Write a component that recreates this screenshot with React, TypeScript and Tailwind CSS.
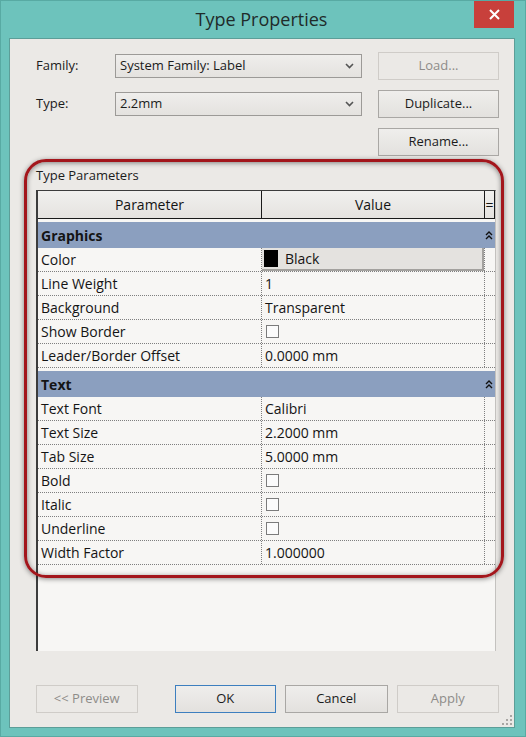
import type { ReactNode } from "react";

type Row = { name: string; value?: string; kind?: "text" | "check" | "color" };

const groups: { title: string; rows: Row[] }[] = [
  {
    title: "Graphics",
    rows: [
      { name: "Color", value: "Black", kind: "color" },
      { name: "Line Weight", value: "1" },
      { name: "Background", value: "Transparent" },
      { name: "Show Border", kind: "check" },
      { name: "Leader/Border Offset", value: "0.0000 mm" },
    ],
  },
  {
    title: "Text",
    rows: [
      { name: "Text Font", value: "Calibri" },
      { name: "Text Size", value: "2.2000 mm" },
      { name: "Tab Size", value: "5.0000 mm" },
      { name: "Bold", kind: "check" },
      { name: "Italic", kind: "check" },
      { name: "Underline", kind: "check" },
      { name: "Width Factor", value: "1.000000" },
    ],
  },
];

function DialogButton({
  children,
  disabled,
  primary,
  className = "",
}: {
  children: ReactNode;
  disabled?: boolean;
  primary?: boolean;
  className?: string;
}) {
  const tone = disabled
    ? "border-[#cfccc8] text-[#8e8c89] bg-[#ebe9e6]"
    : primary
      ? "border-[#3d7fbf] text-[#1b1b1b] bg-gradient-to-b from-[#efeeec] to-[#e3e1de]"
      : "border-[#a9a7a4] text-[#1b1b1b] bg-gradient-to-b from-[#efeeec] to-[#e3e1de]";
  return (
    <div
      className={`flex h-[28px] items-center justify-center border text-[13px] ${tone} ${className}`}
    >
      {children}
    </div>
  );
}

function Select({ value }: { value: string }) {
  return (
    <div className="flex h-[24px] w-[247px] items-center border border-[#9c9a97] bg-gradient-to-b from-[#efeeec] to-[#e4e2df] pl-[4px] pr-[7px] text-[13px] text-[#1b1b1b]">
      <span className="flex-1">{value}</span>
      <svg width="9" height="6" viewBox="0 0 9 6" className="text-[#555]">
        <path d="M1 1l3.5 3.5L8 1" fill="none" stroke="currentColor" strokeWidth="1.6" />
      </svg>
    </div>
  );
}

function Checkbox() {
  return <div className="ml-[4px] h-[13px] w-[13px] border border-[#7b7b7b] bg-[#fbfbfb]" />;
}

function ParamRow({ row }: { row: Row }) {
  return (
    <div className="flex h-[24px] border-b border-dotted border-[#7f7f7f]">
      <div className="flex w-[224px] items-center border-r border-dotted border-[#7f7f7f] pl-[3px]">
        {row.name}
      </div>
      <div className="flex w-[223px] items-center border-r border-dotted border-[#7f7f7f]">
        {row.kind === "color" ? (
          <div className="flex h-full w-full items-center border-b-2 border-r-2 border-[#a3a19e] bg-[#e4e2df] pl-[2px]">
            <div className="h-[17px] w-[14px] bg-black" />
            <span className="ml-[7px]">{row.value}</span>
          </div>
        ) : row.kind === "check" ? (
          <Checkbox />
        ) : (
          <span className="pl-[3px]">{row.value}</span>
        )}
      </div>
      <div className="flex-1" />
    </div>
  );
}

function GroupBand({ title }: { title: string }) {
  return (
    <div className="mt-[3px] flex h-[26px] items-center bg-[#8b9fbf] font-bold">
      <span className="flex-1 pl-[3px]">{title}</span>
      <div className="flex w-[13px] justify-center">
        <svg width="8" height="9" viewBox="0 0 8 9">
          <path d="M1 4l3-3 3 3M1 8l3-3 3 3" fill="none" stroke="#111" strokeWidth="1.4" />
        </svg>
      </div>
    </div>
  );
}

export default function App() {
  return (
    <div
      className="flex h-[737px] w-[526px] flex-col border border-[#58aaa3] bg-[#6dc3bc]"
      style={{ fontFamily: '"Open Sans", "Noto Sans", sans-serif' }}
    >
      <div className="flex h-[37px] items-start">
        <div className="flex h-[37px] flex-1 items-center justify-center pl-[48px] text-[18px] text-[#1f2b2a]">
          Type Properties
        </div>
        <div className="mr-[11px] flex h-[27px] w-[40px] items-center justify-center bg-[#c8403b]">
          <svg width="11" height="11" viewBox="0 0 11 11">
            <path d="M1 1l9 9M10 1l-9 9" stroke="#fff" strokeWidth="2" />
          </svg>
        </div>
      </div>

      <div className="mb-[8px] ml-[8px] mr-[10px] flex flex-1 flex-col border border-[#5c9e98] bg-[#ebe9e6] pr-[15px] pt-[13px]">
        <div className="grid grid-cols-[105px_247px_1fr] items-center gap-y-[10px] text-[13px] text-[#1b1b1b]">
          <span className="pl-[26px]">Family:</span>
          <Select value="System Family: Label" />
          <DialogButton disabled className="ml-[16px]">
            Load...
          </DialogButton>
          <span className="pl-[26px]">Type:</span>
          <Select value="2.2mm" />
          <DialogButton className="ml-[16px]">Duplicate...</DialogButton>
          <span />
          <span />
          <DialogButton className="ml-[16px]">Rename...</DialogButton>
        </div>

        <div className="relative mt-[8px] flex flex-col pl-[26px] pr-[3px]">
          <div className="h-[26px] pt-[2px] text-[13px] text-[#1b1b1b]">Type Parameters</div>
          <div className="flex h-[461px] w-[460px] flex-col border-l-2 border-r border-t border-[#3c3c3c] border-r-[#c4c2bf] bg-[#f7f6f4] text-[14px] text-[#141414]">
            <div className="flex h-[28px] border-b border-[#1a1a1a] bg-gradient-to-b from-[#f1f0ee] to-[#e5e3e0] text-[14px]">
              <div className="flex w-[224px] items-center justify-center border-r border-[#1a1a1a]">
                Parameter
              </div>
              <div className="flex w-[223px] items-center justify-center border-r border-[#1a1a1a]">
                Value
              </div>
              <div className="flex flex-1 items-center justify-center border-r border-[#1a1a1a]">=</div>
            </div>
            {groups.map((g) => (
              <div key={g.title} className="flex flex-col">
                <GroupBand title={g.title} />
                {g.rows.map((r) => (
                  <ParamRow key={r.name} row={r} />
                ))}
              </div>
            ))}
          </div>

          <div className="pointer-events-none absolute left-[14px] top-[-5px] h-[419px] w-[480px] rounded-[22px] border-[3px] border-[#a3161c] shadow-[0_1px_5px_rgba(0,0,0,0.45),inset_0_1px_5px_rgba(0,0,0,0.45)]" />
        </div>

        <div className="mt-[34px] flex items-center pl-[26px]">
          <DialogButton disabled className="w-[102px]">
            &lt;&lt; Preview
          </DialogButton>
          <DialogButton primary className="ml-[37px] w-[102px]">
            OK
          </DialogButton>
          <DialogButton className="ml-[9px] w-[103px]">Cancel</DialogButton>
          <DialogButton disabled className="ml-[9px] w-[103px]">
            Apply
          </DialogButton>
        </div>

        <div className="mt-auto flex justify-end pb-[2px] pr-[0px]">
          <svg width="10" height="10" viewBox="0 0 10 10" className="-mr-[13px]">
            <g fill="#a8a6a3">
              <rect x="8" y="0" width="2" height="2" />
              <rect x="4" y="4" width="2" height="2" />
              <rect x="8" y="4" width="2" height="2" />
              <rect x="0" y="8" width="2" height="2" />
              <rect x="4" y="8" width="2" height="2" />
              <rect x="8" y="8" width="2" height="2" />
            </g>
          </svg>
        </div>
      </div>
    </div>
  );
}
